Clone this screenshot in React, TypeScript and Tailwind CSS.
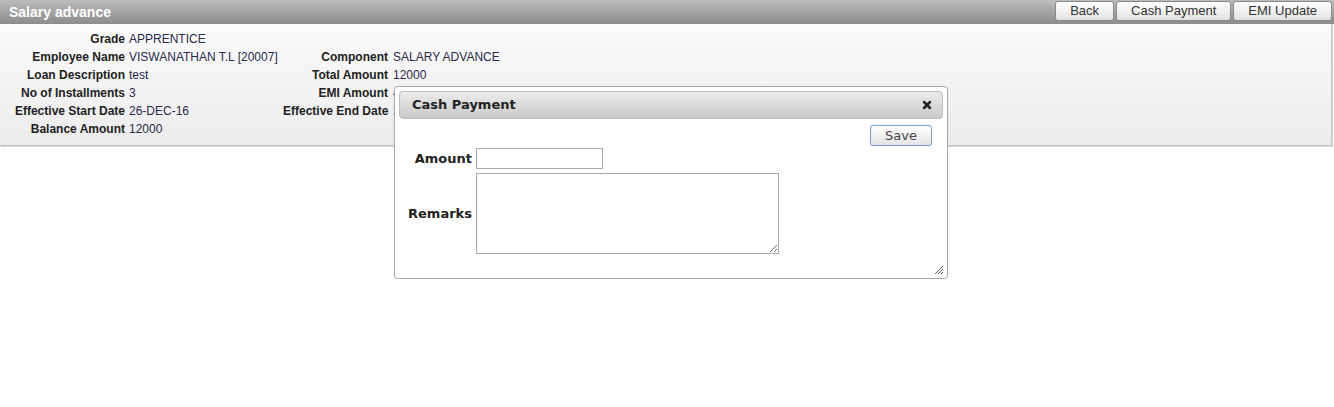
import { X } from "lucide-react";

const rows: [string, string, string?, string?][] = [
  ["Grade", "APPRENTICE"],
  ["Employee Name", "VISWANATHAN T.L [20007]", "Component", "SALARY ADVANCE"],
  ["Loan Description", "test", "Total Amount", "12000"],
  ["No of Installments", "3", "EMI Amount", "4000"],
  ["Effective Start Date", "26-DEC-16", "Effective End Date", "26-MAR-17"],
  ["Balance Amount", "12000"],
];

function TopButton({ label }: { label: string }) {
  return (
    <button className="h-[20px] rounded-[3px] border border-[#8a8a8a] bg-gradient-to-b from-[#ffffff] to-[#e2e2e2] px-[14px] text-[13px] leading-[18px] text-[#333]">
      {label}
    </button>
  );
}

export default function App() {
  return (
    <div className="relative h-[407px] w-[1334px] bg-white font-['Liberation_Sans',Arial,sans-serif]">
      {/* header */}
      <div className="flex h-[24px] items-center justify-between bg-gradient-to-b from-[#bcbcbc] to-[#8c8c8c] pl-[9px] pr-[2px]">
        <span className="text-[14px] font-bold text-white">Salary advance</span>
        <div className="flex gap-[2px] self-start pt-[1px]">
          <TopButton label="Back" />
          <TopButton label="Cash Payment" />
          <TopButton label="EMI Update" />
        </div>
      </div>

      {/* details panel */}
      <div className="mr-[2px] border-r border-b border-[#c4c4c4] bg-gradient-to-b from-[#fbfbfb] to-[#ececec] pt-[6px] pb-[7px] shadow-[1px_1px_1px_rgba(0,0,0,0.15)]">
        <div className="grid grid-cols-[125px_150px_105px_auto] gap-x-[4px] whitespace-nowrap text-[12px] leading-[18px] text-[#222]">
          {rows.map(([l1, v1, l2, v2]) => (
            <div key={l1} className="contents">
              <div className="text-right font-bold">{l1}</div>
              <div className="text-[#2a2a4a]">{v1}</div>
              <div className="text-right font-bold">{l2 ?? ""}</div>
              <div className="pl-[1px] text-[#2a2a4a]">{v2 ?? ""}</div>
            </div>
          ))}
        </div>
      </div>

      {/* dialog */}
      <div className="absolute top-[86px] left-[394px] h-[193px] w-[554px] rounded-[4px] border border-[#aaa] bg-white p-[4px] font-['DejaVu_Sans',Verdana,sans-serif] shadow-[0_0_2px_rgba(0,0,0,0.1)]">
        <div className="flex h-[28px] items-center justify-between rounded-[4px] border border-[#bdbdbd] bg-gradient-to-b from-[#ececec] to-[#c9c9c9] pr-[9px] pl-[12px]">
          <span className="text-[13px] font-bold text-[#222]">Cash Payment</span>
          <X size={12} strokeWidth={5} className="text-[#222]" />
        </div>
        <div className="flex justify-end pt-[6px] pr-[11px]">
          <button className="h-[21px] w-[62px] rounded-[3px] border border-[#7a9fd1] bg-gradient-to-b from-[#ffffff] to-[#e4e4e4] text-[13px] text-[#444] shadow-[0_0_1px_#9bbbe6]">
            Save
          </button>
        </div>
        <div className="mt-[2px] grid grid-cols-[73px_auto] items-center gap-x-[4px] gap-y-[4px] text-[13px] font-bold text-[#222]">
          <div className="text-right">Amount</div>
          <input className="h-[21px] w-[127px] border border-[#aaa] bg-white" />
          <div className="text-right">Remarks</div>
          <textarea className="h-[81px] w-[303px] border border-[#aaa] bg-white" />
        </div>
        <svg className="absolute right-[3px] bottom-[3px]" width="12" height="12" viewBox="0 0 12 12">
          <path d="M11 3 L3 11 M11 6 L6 11 M11 9 L9 11" stroke="#555" strokeWidth="1" />
        </svg>
      </div>
    </div>
  );
}
